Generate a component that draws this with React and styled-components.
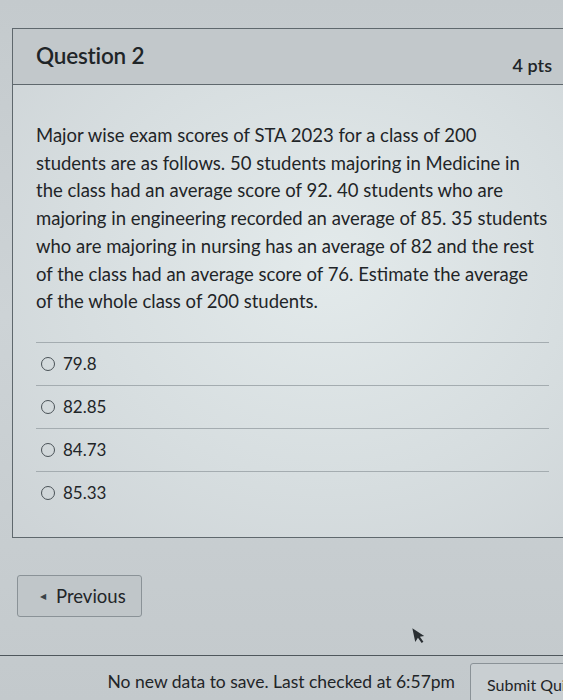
import styled, { createGlobalStyle } from "styled-components";

const Global = createGlobalStyle`
  html, body {
    margin: 0;
    padding: 0;
  }
  body {
    width: 563px;
    height: 700px;
    overflow: hidden;
    font-family: Lato, "Open Sans", sans-serif;
    color: #1f2528;
    background: linear-gradient(180deg, #c4cacd 0%, #cdd3d6 45%, #c3c9cc 100%);
  }
`;

const options = ["79.8", "82.85", "84.73", "85.33"];

const lines = [
  "Major wise exam scores of STA 2023 for a class of 200",
  "students are as follows. 50 students majoring in Medicine in",
  "the class had an average score of 92. 40 students who are",
  "majoring in engineering recorded an average of 85. 35 students",
  "who are majoring in nursing has an average of 82 and the rest",
  "of the class had an average score of 76. Estimate the average",
  "of the whole class of 200 students.",
];

const App = () => {
  return (
    <Page>
      <Global />
      <Main>
        <Card>
          <Header>
            <Title>Question 2</Title>
            <Points>4 pts</Points>
          </Header>
          <Body>
            <Text>
              {lines.map((l, i) => (
                <Line key={i}>{l}</Line>
              ))}
            </Text>
            <Answers>
              {options.map((o) => (
                <Answer key={o}>
                  <Radio />
                  <AnswerText>{o}</AnswerText>
                </Answer>
              ))}
            </Answers>
          </Body>
        </Card>
        <Nav>
          <Button>
            <Caret>◀</Caret>
            Previous
          </Button>
        </Nav>
        <Cursor viewBox="0 0 12 19">
          <path d="M1 1 L1 15 L4.5 11.5 L7 17.5 L9 16.6 L6.6 11 L11 11 Z" fill="#2a2f33" />
        </Cursor>
      </Main>
      <Footer>
        <Status>No new data to save. Last checked at 6:57pm</Status>
        <SubmitButton>Submit Quiz</SubmitButton>
      </Footer>
    </Page>
  );
};

const Page = styled.div`
  display: flex;
  flex-direction: column;
  min-height: 700px;
`;

const Main = styled.div`
  position: relative;
  padding: 28px 0 0 12px;
  height: 655px;
  box-sizing: border-box;
`;

const Card = styled.div`
  width: 570px;
  border: 1px solid #5f686d;
  border-right: none;
`;

const Header = styled.div`
  display: flex;
  justify-content: space-between;
  align-items: flex-start;
  height: 56px;
  box-sizing: border-box;
  padding: 13px 0 0 23px;
  background: #c2c8cb;
  border-bottom: 1px solid #5f686d;
`;

const Title = styled.h2`
  margin: 0;
  font-size: 22.5px;
  font-weight: 600;
  line-height: 28px;
  letter-spacing: -0.2px;
`;

const Points = styled.span`
  margin-top: 11px;
  margin-right: 31px;
  font-size: 18px;
  font-weight: 600;
  line-height: 24px;
`;

const Body = styled.div`
  padding: 37px 23px 23px 23px;
  background: radial-gradient(ellipse at 55% 40%, #e3eaeb 0%, #d7dee0 55%, #cdd3d6 100%);
`;

const Text = styled.p`
  margin: 0;
  font-size: 18.5px;
  line-height: 27.7px;
`;

const Line = styled.span`
  display: block;
  white-space: nowrap;
`;

const Answers = styled.div`
  margin-top: 26px;
  width: 513px;
`;

const Answer = styled.div`
  display: flex;
  align-items: center;
  height: 42px;
  padding-left: 5px;
  border-top: 1px solid #a4acb0;
`;

const Radio = styled.span`
  width: 14px;
  height: 14px;
  border: 1.4px solid #4a5257;
  border-radius: 50%;
  box-sizing: border-box;
  margin-right: 8px;
`;

const AnswerText = styled.span`
  font-size: 17px;
`;

const Nav = styled.div`
  display: flex;
  padding: 37px 0 0 5px;
`;

const Button = styled.button`
  display: flex;
  align-items: center;
  height: 42px;
  width: 125px;
  padding: 0 0 0 22px;
  border: 1px solid #8a9297;
  border-radius: 3px;
  background: #c0c6c9;
  color: #1f2528;
  font-family: Lato, sans-serif;
  font-size: 18.5px;
`;

const Caret = styled.span`
  font-size: 8px;
  margin-right: 10px;
  color: #3a4247;
`;

const Cursor = styled.svg`
  position: absolute;
  left: 413px;
  top: 626px;
  width: 12px;
  height: 19px;
  transform: rotate(-12deg);
`;

const Footer = styled.div`
  display: flex;
  align-items: center;
  justify-content: flex-end;
  height: 45px;
  box-sizing: border-box;
  padding-top: 6px;
  border-top: 1px solid #4f575c;
  margin-right: -70px;
`;

const Status = styled.span`
  font-size: 17.5px;
  margin-right: 15px;
`;

const SubmitButton = styled.button`
  height: 42px;
  width: 163px;
  margin-top: 6px;
  padding: 0 0 0 16px;
  text-align: left;
  border: 1px solid #8a9297;
  border-radius: 3px;
  background: #c9cfd2;
  color: #1f2528;
  font-family: Lato, sans-serif;
  font-size: 16px;
`;

export default App;
